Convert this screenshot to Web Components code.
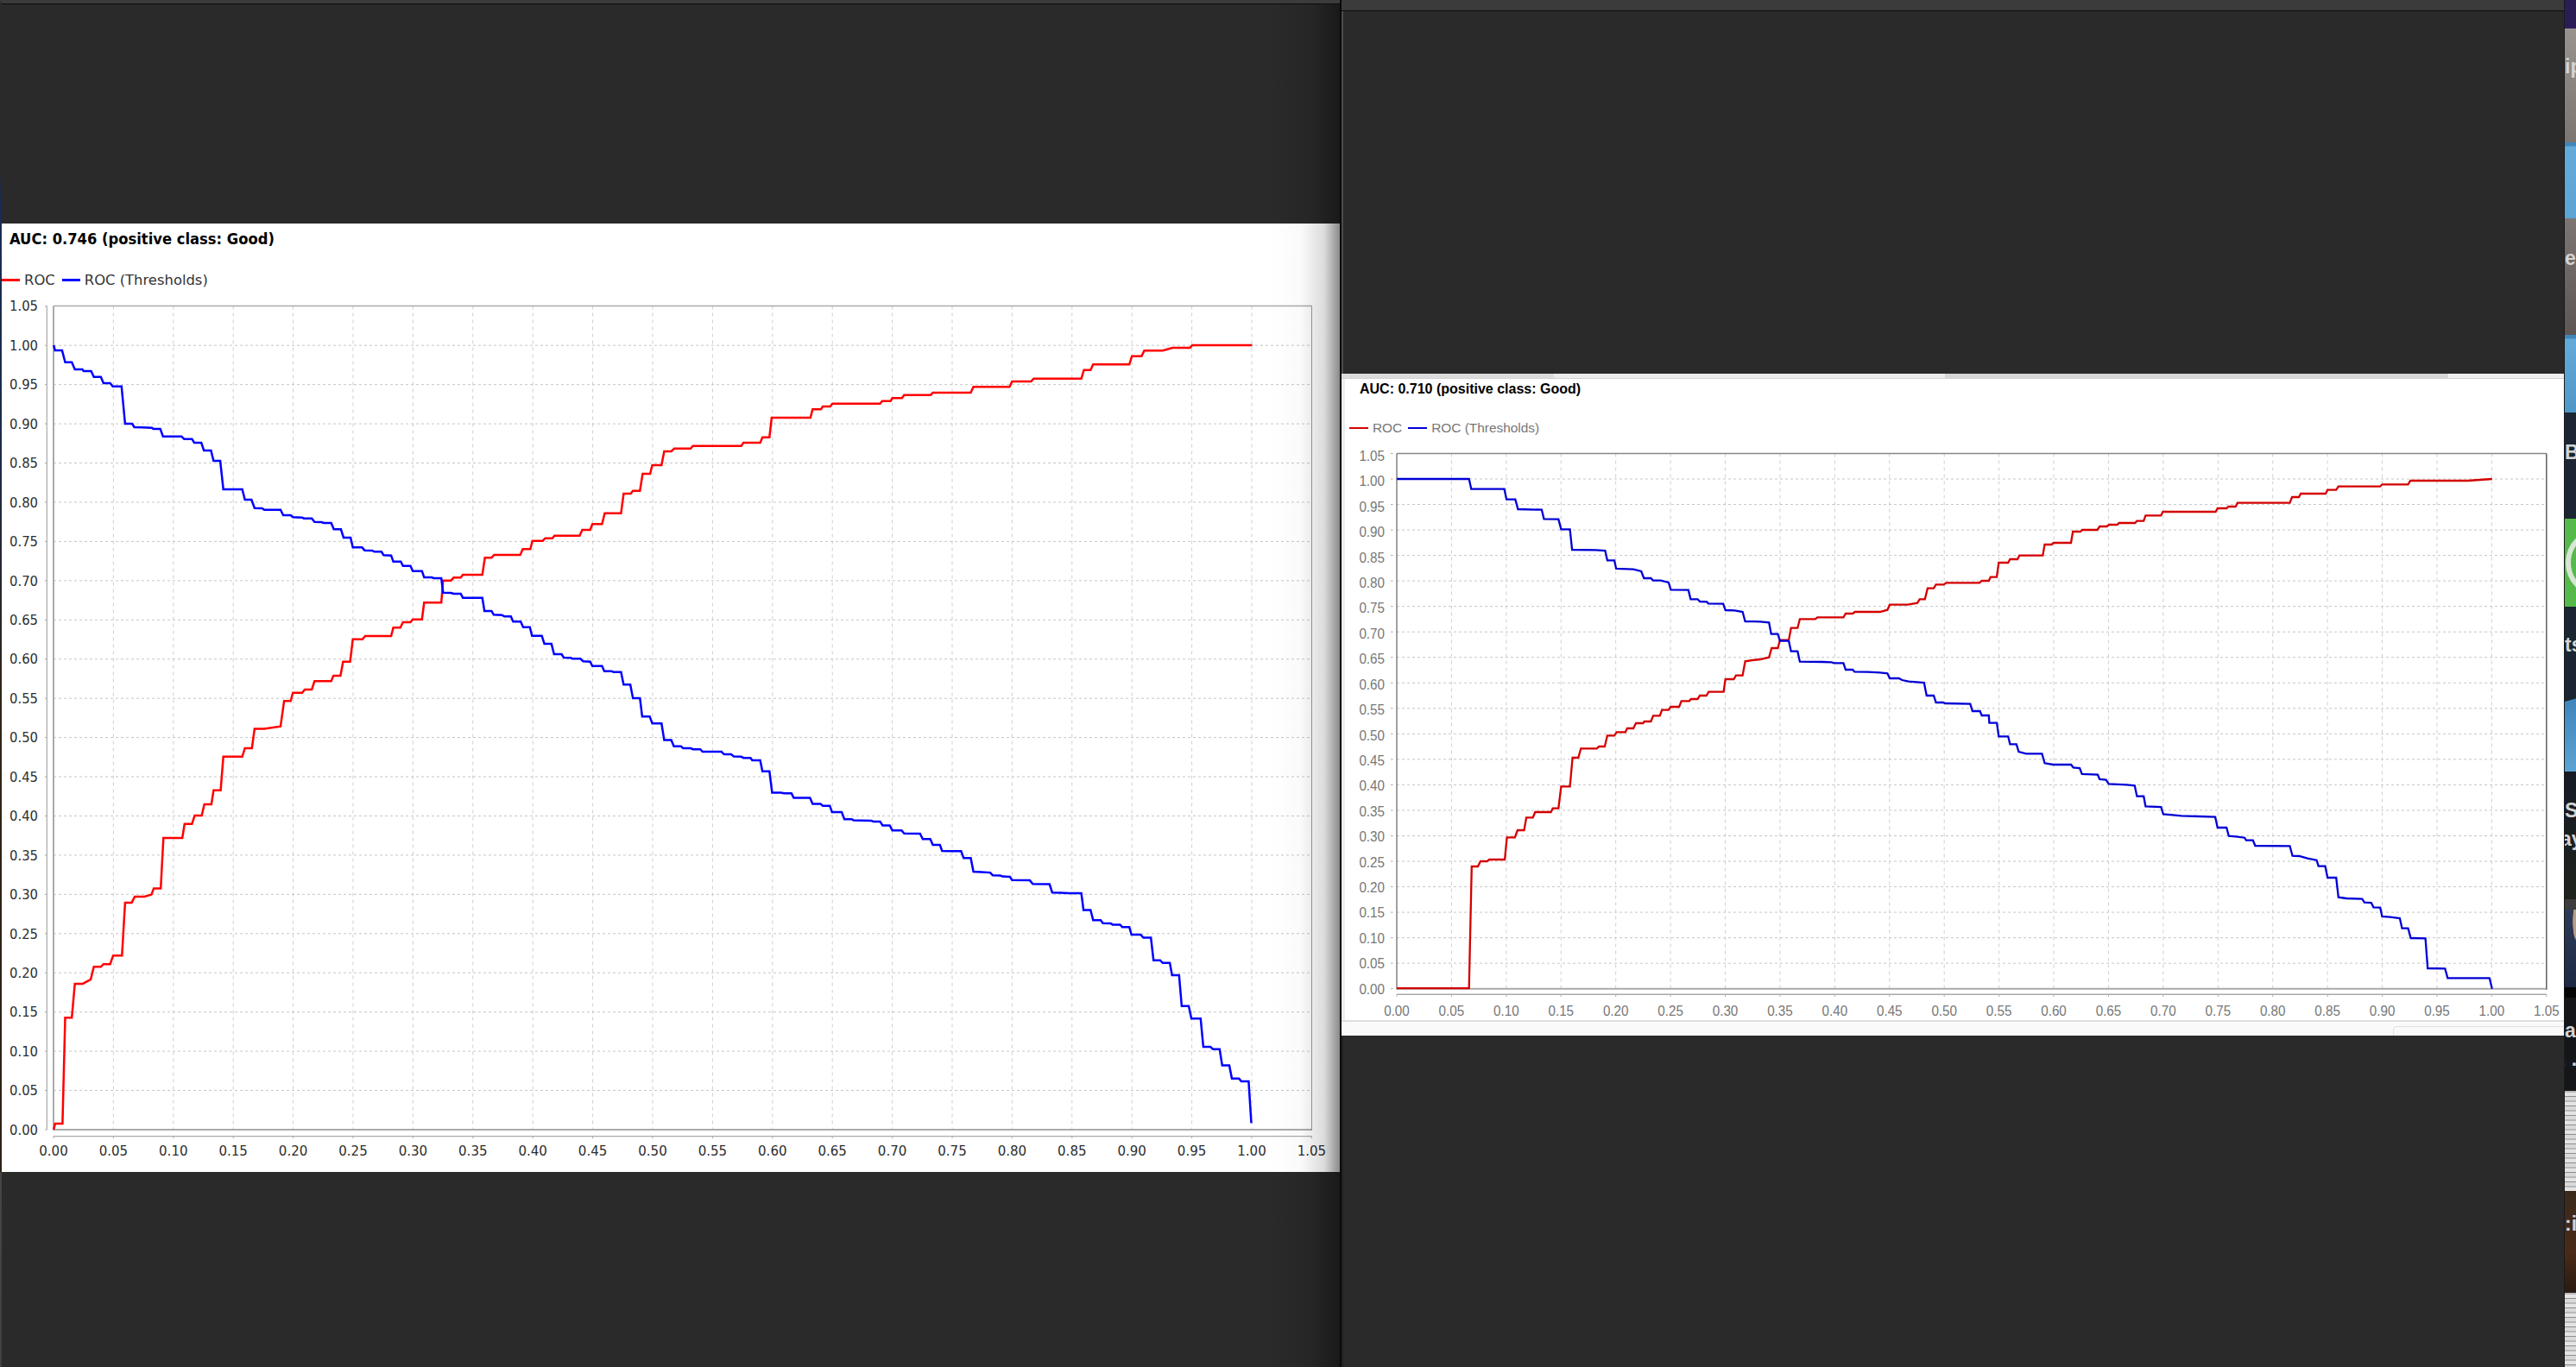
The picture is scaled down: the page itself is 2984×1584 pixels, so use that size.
<!DOCTYPE html>
<html lang="en">
<head>
<meta charset="utf-8">
<title>ROC charts</title>
<style>
html,body{margin:0;padding:0;background:#2a2a2a;width:2984px;height:1584px;overflow:hidden}
</style>
</head>
<body>
<roc-desktop>
  <desk-strip slot="edge"></desk-strip>
  <roc-window slot="left" kind="a">
    <roc-panel kind="a">
      <roc-title slot="title" kind="a">AUC: 0.746 (positive class: Good)</roc-title>
      <roc-legend slot="legend" kind="a"></roc-legend>
      <roc-plot slot="plot" kind="a"></roc-plot>
    </roc-panel>
  </roc-window>
  <roc-window slot="right" kind="b">
    <roc-panel kind="b">
      <roc-title slot="title" kind="b">AUC: 0.710 (positive class: Good)</roc-title>
      <roc-legend slot="legend" kind="b"></roc-legend>
      <roc-plot slot="plot" kind="b"></roc-plot>
    </roc-panel>
  </roc-window>
  <side-strip slot="side">
    <side-tile h="33" bg="#2a1d55"></side-tile>
    <side-tile h="132" bg="linear-gradient(#98938e,#7c7572)" pad="28">ip</side-tile>
    <side-tile h="88" bg="linear-gradient(#3f86bd 4px,#62abdb 5px,#5ba4d4)"></side-tile>
    <side-tile h="135" bg="linear-gradient(#7d7573,#5e5654)" pad="30">e</side-tile>
    <side-tile h="90" bg="linear-gradient(#3f86bd 4px,#62abdb 5px,#4f97c7)"></side-tile>
    <side-tile h="123" bg="#1b2632" pad="30">B</side-tile>
    <side-tile h="102" bg="#56b94b" ring="1"></side-tile>
    <side-tile h="97" bg="#1a2531" pad="28">ts</side-tile>
    <side-tile h="94" bg="linear-gradient(165deg,#1a2531 12px,#3f86bd 13px,#5ba4d4)"></side-tile>
    <side-tile h="148" bg="linear-gradient(#161a26,#1e241c)" pad="29" lines="ay">S</side-tile>
    <side-tile h="12" bg="#3d3d3d"></side-tile>
    <side-tile h="90" bg="radial-gradient(ellipse 4px 22px at 13px 14px,#b99c88 85%,transparent 100%),linear-gradient(#2c3b57,#1d2a44)"></side-tile>
    <side-tile h="12" bg="#050505"></side-tile>
    <side-tile h="108" bg="#14161a" pad="22" lines=". .(">a</side-tile>
    <side-tile h="116" doc="1"></side-tile>
    <side-tile h="118" bg="linear-gradient(#3a2a1c,#4a2a18 60%,#2a1a12)" pad="22">:it</side-tile>
    <side-tile h="86" doc="1"></side-tile>
  </side-strip>
</roc-desktop>

<script>
const seg=(ox,sx,oy,sy,l)=>{const r=[];for(let i=0;i<l.length;i+=2)r.push([ox+l[i]/sx,oy+l[i+1]/sy]);return r};
const Z2=l=>seg(0,1.96,340,3,l), Z3=l=>seg(0,1.96,840,2.904,l), Z4=l=>seg(800,1.96,340,3,l), Z5=l=>seg(800,1.96,840,2.904,l);
const Z6=l=>seg(1540,1.96,420,3,l), Z8=l=>seg(2300,2.292,420,3,l), Z9=l=>seg(2300,2.292,800,3,l);

const DATA={
a:{
 x0:62,x1:1450,xEnd:1519.5,y0:1309,y1:400.2,yEnd:354.5,
 blue:[...Z2([122,180,125,198,141,198,148,239,163,239,170,264,187,264,190,270,207,270,213,290,229,290,235,312,250,312,256,323,276,323,284,453,300,453,305,465,322,466,345,467,348,471,364,471,370,497,412,497,418,506,436,506,441,519,457,519,463,546,479,546,485,582,500,582,507,681,550,681,556,717,571,717,578,746,595,747,600,752,637,752,643,771,660,771,665,778,686,779,690,782,708,782,714,794,730,795,735,798,752,798,758,820,774,820,780,849,796,849,801,883,822,883,828,893,845,894,850,898,866,898,871,910,888,911,893,932,910,932,915,947,932,947,937,965,958,965,963,987,980,987,985,990,1002,990,1006,1040,1024,1041,1030,1044,1046,1044,1051,1058,1095,1058,1100,1104,1116,1104,1121,1117,1140,1118,1145,1123,1160,1123,1165,1141,1182,1141,1188,1160,1203,1160,1208,1190,1230,1190,1236,1218,1252,1218,1258,1254,1275,1254,1280,1266,1296,1267,1300,1270,1318,1270,1324,1279,1340,1280,1345,1295,1367,1295,1372,1313,1388,1313,1393,1316,1410,1316,1416,1360,1431,1360,1437,1407,1453,1407,1458,1471,1475,1471,1481,1495,1502,1495]),
  ...Z3([1508,51,1524,51,1530,72,1546,72,1551,78,1568,78]),
  ...Z5([5,82,22,82,27,90,70,90,76,99,92,99,98,106,115,107,120,111,136,111,140,119,158,119,163,156,179,156,185,228,205,228,212,230,229,230,234,245,271,245,277,266,295,266,300,272,316,272,321,293,343,293,349,317,366,317,370,321,410,322,415,325,430,325,436,338,452,338,458,355,479,355,485,365,521,366,527,384,544,384,550,404,566,404,571,424,593,425,614,425,620,448,636,448,642,494,660,495,680,497,686,506,703,507,708,510,725,511,730,522,770,523,777,535,815,536,821,564,840,565,860,566,887,566,892,623,908,623,914,657,931,657,936,667,954,668,958,672,975,672,980,680,996,680,1001,706,1022,706,1028,716,1045,716,1051,792,1066,792,1072,801,1088,801,1093,842,1109,842,1115,946,1131,946,1137,988,1158,988,1164,1083,1180,1083,1186,1091,1201,1091,1207,1146,1223,1146,1229,1190,1245,1190,1250,1199,1267,1199,1273,1340])],
 red:[...Z3([122,1362,125,1342,142,1342,148,985,163,985,170,871,188,871,206,856,213,814,229,814,235,805,250,805,257,776,277,776,284,598,299,598,306,578,328,578,344,571,349,550,365,550,371,380,414,380,419,333,436,333,442,305,458,305,464,267,480,267,485,220,501,220,507,107,550,107,556,78,572,78,578,13,600,13,637,5]),
  ...Z2([645,1417,660,1417,665,1388,686,1388,692,1377,708,1377,714,1348,752,1348,757,1329,773,1329,779,1280,795,1280,801,1202,823,1202,829,1191,888,1191,893,1162,909,1162,915,1143,932,1143,937,1133,958,1133,963,1075,1002,1075,1006,998,1024,998,1030,988,1046,988,1051,978,1095,978,1101,919,1116,919,1122,909,1181,909,1187,889,1204,889,1209,860,1232,860,1238,851,1254,851,1259,842,1316,842,1322,822,1340,822,1345,802,1367,802,1373,764,1410,764,1416,696,1432,696,1437,686,1453,686,1459,627,1476,627,1481,597,1502,597,1508,549,1524,549,1531,539,1568,539]),
  ...Z4([5,530,115,530,120,519,158,519,163,500,179,500,184,432,272,432,277,403,296,403,300,393,317,393,322,383,430,383,435,374,454,374,458,364,480,364,485,353,545,353,550,345,636,345,642,325,724,325,730,306,773,306,779,296,887,296,893,266,908,266,914,247,996,247,1002,218,1024,218,1030,199,1072,199,1094,189,1134,189,1139,180,1275,180])]
},
b:{
 x0:1618,x1:2886.4,xEnd:2949.8,y0:1145.7,y1:555,yEnd:525.5,
 blue:[...Z6([153,405,317,405,322,440,397,440,402,476,422,476,428,510,482,512,487,544,520,545,526,580,546,580,551,651,605,652,626,654,631,688,647,688,651,717,690,719,708,726,714,750,730,750,735,758,752,758,770,765,775,790,815,791,820,823,836,823,841,831,857,832,860,838,894,839,899,861,920,862,938,867,944,900,978,901,998,904,1003,944,1018,944,1023,968,1043,968,1048,1004,1063,1004,1068,1040,1120,1041,1140,1042,1145,1045,1167,1045,1172,1068,1188,1068,1192,1075,1222,1076,1250,1078,1267,1081,1272,1098,1293,1098,1300,1104,1315,1109,1350,1113,1356,1158,1372,1158,1377,1182,1393,1182,1398,1185,1455,1187,1460,1212,1477,1212,1481,1227,1497,1227]),
  ...Z9([10,113,30,113,35,160,60,160,65,187,82,187,88,213,108,220,150,220,157,253,180,258,227,258,233,268,250,270,256,291,298,293,303,309,320,311,327,325,375,328,396,331,402,368,420,368,425,403,466,405,472,430,497,433,520,436,610,440,616,477,640,477,646,506,665,508,688,512,692,521,710,521,716,540,808,541,815,575,833,576,855,584,879,590,884,611,902,611,908,651,931,651,937,719,958,723,1000,725,1006,737,1024,738,1030,754,1048,755,1053,786,1075,788,1100,792,1106,827,1122,827,1129,861,1168,862,1174,966,1220,967,1227,1000,1338,1000,1345,1037])],
 red:[...Z6([153,2175,317,2175,323,1752,337,1752,343,1734,358,1734,363,1728,398,1728,403,1651,421,1651,427,1626,442,1626,447,1582,462,1582,467,1563,503,1563,507,1550,520,1550,526,1474,546,1474,552,1374,565,1374,571,1342,607,1342,612,1335,625,1335,631,1297,647,1297,652,1285,672,1285,676,1272,690,1272,696,1254,712,1254,715,1248,730,1248,735,1228,750,1228,755,1208,770,1208,775,1197,794,1197,799,1177,817,1177,821,1170,836,1170,841,1158,856,1158,861,1145,895,1145,899,1101,918,1101,923,1088,938,1088,944,1039,960,1035,978,1032,998,1025,1004,993,1018,993,1023,965,1043,965,1048,923,1063,923,1068,892,1103,892,1108,886,1167,886,1172,873,1188,873,1193,867,1250,867,1267,860,1272,842,1313,842,1335,836,1340,823,1352,823,1358,785,1372,785,1377,772,1395,772,1400,766,1476,766,1481,759,1497,759,1501,746,1515,746]),
  ...Z8([35,696,60,696,65,684,85,684,90,671,152,671,157,633,175,633,181,627,227,627,232,588,252,588,257,582,297,582,303,570,322,570,328,564,350,564,354,558,397,558,402,551,420,551,425,532,466,532,471,519,611,519,616,507,640,507,645,501,664,501,669,488,808,488,814,468,832,468,837,456,903,456,908,443,931,443,937,431,1048,431,1053,424,1122,424,1128,411,1280,411,1345,405])]
}};
DATA.b.red[0][1]=DATA.b.y0-0.6; DATA.b.red[1][1]=DATA.b.y0-0.6;

const STYLE={
a:{vb:[2,340,1550,1018],font:'"DejaVu Sans"',size:15,lenY:33,lenX:33.5,labelFill:'#2e2e2e',gridH:'#c6c6c6',gridV:'#cfcfcf',
   yLabelX:44,xBase:1339,axisX:54.3,axisY:1316.6,tickL:52,red:'#ff0000',blue:'#0000ff',sw:2.5,
   frameL:'#aaaaaa',frameLw:2,frameT:'#aaaaaa',frameR:'#999999',frameRw:1,frameB:'#aaaaaa',yOff:v=>5.7,showYAxis:true},
b:{vb:[1558,510,1412,672],font:'"Liberation Sans"',size:16.5,lenY:29.6,lenX:29.6,labelFill:'#777777',gridH:'#c6c6c6',gridV:'#cfcfcf',
   yLabelX:1604,xBase:1176.7,axisX:1612,axisY:1152.3,tickL:1611,red:'#d40000',blue:'#0000d6',sw:2.3,
   frameL:'#444444',frameLw:1,frameT:'#888888',frameR:'#555555',frameRw:1.4,frameB:'#aaaaaa',yOff:v=>6+2.5*v/1.05,showYAxis:false}
};

class RocPlot extends HTMLElement{
  constructor(){super();this.attachShadow({mode:'open'})}
  connectedCallback(){
    const k=this.getAttribute('kind'),d=DATA[k],s=STYLE[k];
    const px=v=>d.x0+(d.x1-d.x0)*v, py=v=>d.y0-(d.y0-d.y1)*v;
    const ln=(a,b,c,e,col,w,dash)=>`<line x1="${a}" y1="${b}" x2="${c}" y2="${e}" stroke="${col}" stroke-width="${w}"${dash?` stroke-dasharray="${dash}"`:''}/>`;
    let g='',labels='';
    for(let i=0;i<=21;i++){
      const v=i*0.05,t=v.toFixed(2),X=px(v),Y=py(v);
      if(i>0&&i<21){
        g+=ln(X,d.yEnd,X,d.y0,s.gridV,1,'4 4');
        g+=ln(d.x0,Y,d.xEnd,Y,s.gridH,1,'3 3');
      }
      g+=ln(s.tickL,Y,s.tickL+2.6,Y,'#aaaaaa',1);
      g+=ln(X,s.axisY,X,s.axisY+2.6,'#aaaaaa',1);
      labels+=`<text x="${s.yLabelX}" y="${Y+s.yOff(v)}" text-anchor="end" textLength="${s.lenY}" lengthAdjust="spacingAndGlyphs">${t}</text>`;
      labels+=`<text x="${X}" y="${s.xBase}" text-anchor="middle" textLength="${s.lenX}" lengthAdjust="spacingAndGlyphs">${t}</text>`;
    }
    const frame=ln(d.x0,d.yEnd,d.xEnd,d.yEnd,s.frameT,1.4)+ln(d.x0,d.y0,d.xEnd,d.y0,s.frameB,2)+
      ln(d.x0,d.yEnd,d.x0,d.y0+1,s.frameL,s.frameLw)+ln(d.xEnd,d.yEnd,d.xEnd,d.y0+1,s.frameR,s.frameRw);
    const axes=ln(d.x0,s.axisY,d.xEnd,s.axisY,'#aaaaaa',1.4)+(s.showYAxis?ln(s.axisX,d.yEnd,s.axisX,d.y0,'#aaaaaa',1.2):'');
    const path=(pts,c)=>`<polyline points="${pts.map(p=>p[0].toFixed(1)+','+p[1].toFixed(1)).join(' ')}" fill="none" stroke="${c}" stroke-width="${s.sw}" stroke-linejoin="miter"/>`;
    const [vx,vy,vw,vh]=s.vb;
    this.shadowRoot.innerHTML=`<style>:host{display:block;width:${vw}px;height:${vh}px}svg{display:block}text{font-family:${s.font},sans-serif;font-size:${s.size}px;fill:${s.labelFill}}</style>
    <svg width="${vw}" height="${vh}" viewBox="${vx} ${vy} ${vw} ${vh}" role="img" aria-label="ROC curve">${g}${frame}${axes}${path(d.red,s.red)}${path(d.blue,s.blue)}${labels}</svg>`;
  }
}

class RocTitle extends HTMLElement{
  constructor(){super();this.attachShadow({mode:'open'})}
  connectedCallback(){
    const a=this.getAttribute('kind')==='a';
    this.shadowRoot.innerHTML=`<style>:host{display:block;box-sizing:border-box;color:#000;white-space:nowrap;
      ${a?'height:46px;padding:3px 0 0 9px;font:700 18.2px/30px "DejaVu Sans Condensed","DejaVu Sans",sans-serif;'
         :'height:40px;padding:2px 0 0 17px;font:700 16px/20px "Liberation Sans",sans-serif;'}}</style><slot></slot>`;
  }
}

class RocLegend extends HTMLElement{
  constructor(){super();this.attachShadow({mode:'open'})}
  connectedCallback(){
    const k=this.getAttribute('kind'),a=k==='a',s=STYLE[k];
    const item=(c,t)=>`<span class="item"><i style="background:${c}"></i><span>${t}</span></span>`;
    this.shadowRoot.innerHTML=`<style>
      :host{display:flex;align-items:center;box-sizing:border-box;white-space:nowrap;
      ${a?'height:35px;gap:8px;padding:4px 0 0 0;color:#333;font:16.4px "DejaVu Sans",sans-serif;'
         :'height:31px;gap:7px;padding:3px 0 0 5px;color:#777;font:15.4px "Liberation Sans",sans-serif;'}}
      .item{display:flex;align-items:center;gap:5px}
      i{display:block;width:${a?21:22}px;height:2.5px}
    </style>${item(s.red,'ROC')}${item(s.blue,'ROC (Thresholds)')}`;
  }
}

class RocPanel extends HTMLElement{
  constructor(){super();this.attachShadow({mode:'open'})}
  connectedCallback(){
    const a=this.getAttribute('kind')==='a';
    this.shadowRoot.innerHTML=a?`<style>:host{display:block;height:1099px;background:#fff;position:relative;overflow:hidden}
      .shade{position:absolute;inset:0 0 0 auto;width:82px;pointer-events:none;
      background:linear-gradient(90deg,rgba(0,0,0,0) 0,rgba(0,0,0,.02) 45%,rgba(0,0,0,.14) 78%,rgba(0,0,0,.46) 100%)}</style>
      <slot name="title"></slot><slot name="legend"></slot><slot name="plot"></slot><div class="shade"></div>`
    :`<style>:host{display:block;height:767px;background:#fff;position:relative;box-sizing:border-box}
      .tabs{display:flex;height:6px;border-bottom:1px solid #d2d2d2;box-sizing:border-box}
      .tabs div:nth-child(1){width:246px;background:#dcdcdc}.tabs div:nth-child(2){width:453px;background:#ececec}
      .tabs div:nth-child(3){width:583px;background:#d6d6d6}.tabs div:nth-child(4){flex:1;background:#f0f0f0}
      .body{border-left:4px solid #eeeeee;height:743px;overflow:hidden}
      .foot{height:18px;box-sizing:border-box;border-top:2px solid #dedede;background:#fafafa;display:flex;justify-content:flex-end;align-items:flex-end}
      .foot div{width:198px;height:11px;box-sizing:border-box;border:1.5px solid #e2e2e2;border-bottom:0;border-right:0;border-radius:5px 0 0 0}</style>
      <div class="tabs"><div></div><div></div><div></div><div></div></div>
      <div class="body"><slot name="title"></slot><slot name="legend"></slot><slot name="plot"></slot></div>
      <div class="foot"><div></div></div>`;
  }
}

class RocWindow extends HTMLElement{
  constructor(){super();this.attachShadow({mode:'open'})}
  connectedCallback(){
    const a=this.getAttribute('kind')==='a';
    this.shadowRoot.innerHTML=`<style>
      :host{display:flex;flex-direction:column;height:1584px;background:#2a2a2a;position:relative;box-sizing:border-box}
      .bar{height:${a?4:12}px;background:#3b3b3b;border-bottom:1px solid #0c0c0c;flex:none}
      .gap{height:${a?254:420}px;flex:none;${a?'':'box-shadow:inset 2px 0 0 #4b4b4b;'}}
      .rest{flex:1;${a?'':'box-shadow:inset 2px 0 0 #222;'}}
      .shade{position:absolute;right:0;top:5px;bottom:0;width:82px;pointer-events:none;
        background:linear-gradient(90deg,rgba(0,0,0,0) 0,rgba(0,0,0,.1) 60%,rgba(0,0,0,.4) 100%);display:${a?'block':'none'}}
      .front{position:relative;z-index:1;flex:none}
    </style><div class="bar"></div><div class="gap"></div><div class="front"><slot></slot></div><div class="rest"></div><div class="shade"></div>`;
  }
}

class DeskStrip extends HTMLElement{
  constructor(){super();this.attachShadow({mode:'open'})}
  connectedCallback(){
    this.shadowRoot.innerHTML=`<style>:host{display:block;width:2px;height:1584px;
      background:linear-gradient(#3a3a3a 0,#2a2a2a 4px,#2a2a2a 200px,#1a2b55 230px,#1c2a4c 500px,#2e2416 800px,#2c2214 1357px,#454545 1359px,#404040 100%)}</style>`;
  }
}

class SideStrip extends HTMLElement{
  constructor(){super();this.attachShadow({mode:'open'})}
  connectedCallback(){
    this.shadowRoot.innerHTML=`<style>:host{display:flex;flex-direction:column;height:1584px;overflow:hidden;background:#111}</style><slot></slot>`;
  }
}

class SideTile extends HTMLElement{
  constructor(){super();this.attachShadow({mode:'open'})}
  connectedCallback(){
    const h=+this.getAttribute('h'),pad=this.getAttribute('pad')||0,lines=this.getAttribute('lines');
    const doc=this.hasAttribute('doc');
    const bg=doc?'repeating-linear-gradient(#b9b9b9 0 2px,#e4e4e4 2px 6px,#8d8d8d 6px 7px,#d9d9d9 7px 11px)':this.getAttribute('bg');
    const ring=this.hasAttribute('ring')?`<svg width="13" height="${h}" viewBox="0 0 13 ${h}" style="display:block"><circle cx="41" cy="51" r="37" fill="none" stroke="#d7e6d3" stroke-width="6"/></svg>`:'';
    this.shadowRoot.innerHTML=`<style>:host{display:block;flex:none;height:${h}px;background:${bg};overflow:hidden;color:#d4d4d4;
      font:700 23px/33px "Liberation Sans",sans-serif;white-space:nowrap;box-sizing:border-box;padding-top:${pad}px}
      div{margin:0}.l2{margin-left:-5px}</style>${ring}<div><slot></slot></div>${lines?`<div class="l2">${lines}</div>`:''}`;
  }
}

class RocDesktop extends HTMLElement{
  constructor(){super();this.attachShadow({mode:'open'})}
  connectedCallback(){
    this.shadowRoot.innerHTML=`<style>:host{display:grid;grid-template-columns:2px 1550px 2px 1416px 1px 13px;width:2984px;height:1584px;background:#2a2a2a;overflow:hidden}
      .sep{background:#0a0a0a}.rule{background:#1a1a1a}</style>
      <slot name="edge"></slot><slot name="left"></slot><div class="sep"></div><slot name="right"></slot><div class="rule"></div><slot name="side"></slot>`;
  }
}
customElements.define('roc-plot',RocPlot);
customElements.define('roc-title',RocTitle);
customElements.define('roc-legend',RocLegend);
customElements.define('roc-panel',RocPanel);
customElements.define('roc-window',RocWindow);
customElements.define('desk-strip',DeskStrip);
customElements.define('side-strip',SideStrip);
customElements.define('side-tile',SideTile);
customElements.define('roc-desktop',RocDesktop);
</script>
</body>
</html>
